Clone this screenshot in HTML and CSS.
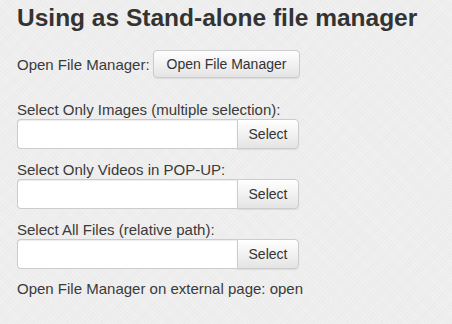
FILE: index.html
```html
<!DOCTYPE html>
<html lang="en">
<head>
  <meta charset="UTF-8" />
  <title>Stand-alone file manager</title>
  <link rel="stylesheet" href="styles.css">
</head>
<body>

  <h1 class="title">Using as Stand-alone file manager</h1>

  <div class="open-row">
    <span>Open File Manager:</span>
    <button class="btn" type="button">Open File Manager</button>
  </div>

  <!-- images -->
  <label class="field-label">Select Only Images (multiple selection):</label>
  <div class="input-group">
    <input type="text" />
    <button class="btn" type="button">Select</button>
  </div>

  <!-- videos -->
  <label class="field-label">Select Only Videos in POP-UP:</label>
  <div class="input-group">
    <input type="text" />
    <button class="btn" type="button">Select</button>
  </div>

  <!-- all files -->
  <label class="field-label">Select All Files (relative path):</label>
  <div class="input-group">
    <input type="text" />
    <button class="btn" type="button">Select</button>
  </div>

  <p class="external">Open File Manager on external page: <a href="#">open</a></p>

</body>
</html>
```

FILE: styles.css
```css
* {
  box-sizing: border-box;
}
body {
  margin: 0;
  padding: 0 17px;
  font-family: 'Liberation Sans', Arial, sans-serif;
  font-size: 15px;
  color: #3a3a3a;
  background-color: #ebebeb;
  background-image:
    repeating-linear-gradient(45deg, rgba(255,255,255,0.22) 0 1px, transparent 1px 3px),
    repeating-linear-gradient(-45deg, rgba(255,255,255,0.15) 0 1px, transparent 1px 2px);
}
.title {
  margin: 3px 0 0;
  font-size: 24.5px;
  line-height: 30px;
  font-weight: bold;
  color: #333;
}
.open-row {
  display: flex;
  align-items: center;
  gap: 3px;
  margin-top: 17px;
}
.btn {
  font-family: inherit;
  font-size: 14px;
  line-height: 20px;
  color: #333;
  padding: 3px 13px;
  background: linear-gradient(to bottom, #ffffff 0%, #e4e4e4 100%);
  border: 1px solid #ccc;
  border-radius: 4px;
  box-shadow: 0 1px 1px rgba(0, 0, 0, 0.08);
  cursor: pointer;
}
.field-label {
  display: block;
  margin-top: 22px;
  line-height: 19px;
}
.input-group + .field-label {
  margin-top: 11px;
}
.input-group {
  display: flex;
  width: 282px;
  height: 30px;
}
.input-group input {
  flex: 1;
  min-width: 0;
  border: 1px solid #ccc;
  border-right: none;
  border-radius: 4px 0 0 4px;
  background: white;
  box-shadow: inset 0 1px 1px rgba(0, 0, 0, 0.075);
}
.input-group .btn {
  width: 62px;
  padding: 0;
  border-radius: 0 4px 4px 0;
}
.external {
  margin: 10px 0 0;
  line-height: 19px;
}
.external a {
  color: inherit;
  text-decoration: none;
}
```
